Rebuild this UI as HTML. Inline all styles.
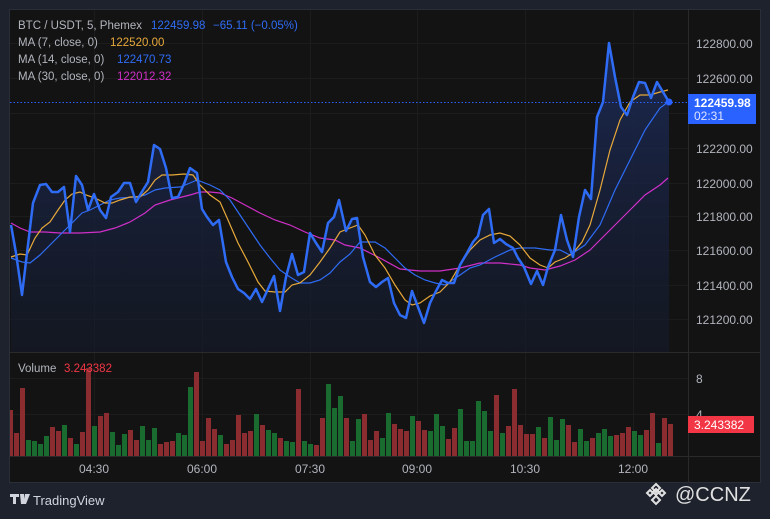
<!DOCTYPE html>
<html><head><meta charset="utf-8">
<style>
html,body{margin:0;padding:0;background:#1e222d;width:770px;height:519px;overflow:hidden;font-family:"Liberation Sans",sans-serif}
svg{position:absolute;left:0;top:0}
</style></head><body>
<svg width="770" height="519" viewBox="0 0 770 519" xmlns="http://www.w3.org/2000/svg" font-family="Liberation Sans, sans-serif">
<defs>
<linearGradient id="fg" x1="0" y1="0" x2="0" y2="1">
<stop offset="0" stop-color="#1c2a55" stop-opacity="0.95"/>
<stop offset="1" stop-color="#141a2a" stop-opacity="0.6"/>
</linearGradient>
<clipPath id="pc"><rect x="10" y="10" width="678" height="342"/></clipPath>
<clipPath id="vc"><rect x="10" y="353" width="678" height="103"/></clipPath>
</defs>
<rect width="770" height="519" fill="#1e222d"/>
<rect x="9.5" y="9.5" width="751" height="473" fill="#131313" stroke="#2a2e39"/>
<g stroke="#1c1c1c" stroke-width="1">
<line x1="94.5" y1="10" x2="94.5" y2="456"/><line x1="202.5" y1="10" x2="202.5" y2="456"/>
<line x1="310.5" y1="10" x2="310.5" y2="456"/><line x1="417.5" y1="10" x2="417.5" y2="456"/>
<line x1="525.5" y1="10" x2="525.5" y2="456"/><line x1="633.5" y1="10" x2="633.5" y2="456"/>
<line x1="10" y1="43.5" x2="688" y2="43.5"/><line x1="10" y1="78.5" x2="688" y2="78.5"/>
<line x1="10" y1="113.5" x2="688" y2="113.5"/><line x1="10" y1="148.5" x2="688" y2="148.5"/>
<line x1="10" y1="183.5" x2="688" y2="183.5"/><line x1="10" y1="216.5" x2="688" y2="216.5"/>
<line x1="10" y1="250.5" x2="688" y2="250.5"/><line x1="10" y1="285.5" x2="688" y2="285.5"/>
<line x1="10" y1="319.5" x2="688" y2="319.5"/>
<line x1="10" y1="378.5" x2="688" y2="378.5"/><line x1="10" y1="414.5" x2="688" y2="414.5"/>
</g>
<line x1="10" y1="352.5" x2="760" y2="352.5" stroke="#2a2a2a"/>
<line x1="10" y1="456.5" x2="760" y2="456.5" stroke="#2a2a2a"/>
<line x1="688.5" y1="10" x2="688.5" y2="483" stroke="#2a2a2a"/>
<g id="price" clip-path="url(#pc)"></g>
<g id="vol" clip-path="url(#vc)"></g>
<line x1="10" y1="102.5" x2="688" y2="102.5" stroke="#2962ff" stroke-dasharray="1.5 2"/>
<circle cx="669" cy="102" r="3.5" fill="#2962ff"/>
<g font-size="12" fill="#b2b5be">
<text x="696" y="48">122800.00</text><text x="696" y="83">122600.00</text>
<text x="696" y="153">122200.00</text><text x="696" y="188">122000.00</text>
<text x="696" y="221">121800.00</text><text x="696" y="255">121600.00</text>
<text x="696" y="290">121400.00</text><text x="696" y="324">121200.00</text>
<text x="696" y="383">8</text><text x="696" y="419">4</text>
</g>
<rect x="688" y="94" width="68" height="30" fill="#2962ff"/>
<text x="694" y="107" font-size="12" font-weight="bold" fill="#fff">122459.98</text>
<text x="694" y="120" font-size="12" fill="#dde4ff">02:31</text>
<rect x="688" y="416" width="66" height="17" fill="#f23645"/>
<text x="694" y="429" font-size="12" fill="#fff">3.243382</text>
<g font-size="12" fill="#b2b5be" text-anchor="middle">
<text x="94" y="473">04:30</text><text x="202" y="473">06:00</text><text x="310" y="473">07:30</text>
<text x="417" y="473">09:00</text><text x="525" y="473">10:30</text><text x="633" y="473">12:00</text>
</g>
<g font-size="11.5">
<text x="18" y="29" fill="#b2b5be">BTC / USDT, 5, Phemex</text>
<text x="151" y="29" fill="#2f6cf5">122459.98</text>
<text x="213" y="29" fill="#2f6cf5">−65.11 (−0.05%)</text>
<text x="18" y="46" fill="#b2b5be">MA (7, close, 0)</text>
<text x="110" y="46" fill="#e8a93a">122520.00</text>
<text x="18" y="63" fill="#b2b5be">MA (14, close, 0)</text>
<text x="117" y="63" fill="#2f6cf5">122470.73</text>
<text x="18" y="80" fill="#b2b5be">MA (30, close, 0)</text>
<text x="117" y="80" fill="#d02fc9">122012.32</text>
<text x="18" y="372" fill="#b2b5be">Volume</text>
<text x="64" y="372" fill="#f23645">3.243382</text>
</g>
<g fill="#d1d4dc">
<path d="M10 494h9v3h-3v7h-3v-7h-3z M20 494h4v10h-3z M25 494h5l-4 10h-3z"/>
<text x="33" y="505" font-size="13">TradingView</text>
</g>
<g fill="#e0e0e0">
<path d="M656 484l4 4-4 4-4-4z M650 490l3 3-3 3-3-3z M662 490l3 3-3 3-3-3z M656 496l4 4-4 4-4-4z M656 489l3 3-3 3-3-3z" fill="none" stroke="#e0e0e0" stroke-width="2"/>
<text x="675" y="501" font-size="20">@CCNZ</text>
</g>
</svg>
<script>
var P=[[11,225],[16,253],[22,295],[27,253],[33,203],[40,185],[46,184],[52,192],[58,192],[64,187],[70,232],[76,176],[82,185],[88,210],[94,194],[100,210],[106,218],[111,197],[118,192],[124,183],[130,183],[136,202],[143,190],[148,182],[154,145],[160,149],[166,168],[172,198],[178,197],[184,184],[190,168],[197,173],[202,209],[207,217],[213,225],[219,220],[226,262],[232,277],[238,289],[244,293],[250,299],[256,289],[262,302],[268,289],[274,276],[280,311],[286,277],[292,254],[298,275],[304,272],[310,233],[316,243],[322,252],[328,223],[334,217],[339,200],[346,231],[352,219],[357,218],[363,257],[370,282],[376,287],[382,282],[388,278],[394,303],[400,315],[406,318],[412,291],[418,307],[424,323],[430,303],[436,291],[442,280],[448,283],[454,283],[460,265],[467,253],[473,242],[478,236],[483,215],[489,209],[494,243],[500,239],[506,244],[513,248],[518,258],[524,267],[531,284],[537,271],[543,285],[548,267],[555,250],[561,215],[567,240],[573,257],[579,217],[585,190],[591,199],[597,117],[603,102],[609,43],[615,77],[621,107],[627,115],[633,97],[639,82],[645,83],[651,98],[657,82],[663,92],[669,102]];
var M7=[[11,257],[20,254],[27,255],[35,238],[42,228],[50,222],[58,210],[65,200],[72,194],[80,192],[86,195],[95,198],[105,203],[112,203],[120,200],[130,197],[140,197],[148,190],[155,180],[162,175],[172,175],[184,174],[193,175],[200,185],[210,195],[220,202],[228,220],[238,243],[248,262],[258,282],[265,291],[275,292],[285,292],[292,285],[300,283],[310,275],[320,262],[330,248],[340,232],[350,228],[358,225],[365,235],[375,255],[385,268],[395,285],[405,300],[412,305],[420,303],[430,296],[440,292],[450,282],[460,265],[470,250],[480,240],[490,235],[500,233],[510,236],[520,245],[530,258],[540,265],[548,268],[555,262],[565,258],[573,253],[582,242],[590,225],[600,190],[610,150],[620,120],[630,102],[640,95],[650,95],[660,92],[668,90]];
var M14=[[11,258],[22,262],[30,263],[40,255],[50,245],[60,235],[68,227],[75,220],[82,213],[90,210],[100,205],[110,200],[120,198],[135,197],[145,195],[155,190],[165,188],[180,187],[190,183],[197,180],[210,185],[220,190],[230,200],[240,215],[250,230],[260,245],[270,258],[280,270],[290,277],[300,283],[310,283],[320,280],[330,273],[340,262],[350,254],[360,242],[375,242],[385,248],[395,258],[405,268],[415,275],[425,280],[435,283],[445,285],[460,275],[470,268],[480,265],[495,257],[510,250],[520,248],[535,248],[550,250],[560,250],[570,255],[585,245],[600,225],[615,190],[630,160],[645,130],[660,108],[668,102]];
var M30=[[11,223],[20,228],[30,232],[45,232],[60,233],[80,233],[100,232],[115,228],[130,222],[145,213],[155,205],[170,200],[190,195],[200,192],[210,192],[220,193],[232,198],[245,205],[260,213],[275,220],[290,225],[305,232],[320,238],[335,240],[345,245],[360,248],[380,258],[400,269],[420,271],[440,271],[460,268],[480,263],[500,263],[520,265],[530,268],[545,270],[560,266],[575,260],[590,250],[600,240],[615,225],[630,210],[645,195],[660,185],[668,178]];
function pts(a){return a.map(function(p){return p[0]+','+p[1]}).join(' ')}
var h='<polygon points="'+pts(P)+' 669,352 11,352" fill="url(#fg)"/>';
h+='<polyline points="'+pts(M30)+'" fill="none" stroke="#d02fc9" stroke-width="1.2"/>';
h+='<polyline points="'+pts(M14)+'" fill="none" stroke="#2f6cf5" stroke-width="1.2"/>';
h+='<polyline points="'+pts(M7)+'" fill="none" stroke="#e8a93a" stroke-width="1.2"/>';
h+='<polyline points="'+pts(P)+'" fill="none" stroke="#2f6cf5" stroke-width="2.5" stroke-linejoin="round"/>';
document.getElementById('price').innerHTML=h;
var V=[[410,'r'],[433,'r'],[388,'r'],[440,'g'],[441,'g'],[444,'g'],[436,'g'],[427,'r'],[431,'r'],[425,'g'],[438,'r'],[444,'g'],[432,'r'],[368,'r'],[426,'g'],[416,'r'],[413,'r'],[432,'g'],[445,'g'],[434,'g'],[430,'r'],[440,'r'],[426,'g'],[440,'g'],[428,'g'],[444,'r'],[442,'r'],[441,'r'],[433,'g'],[435,'g'],[387,'g'],[372,'r'],[441,'r'],[418,'r'],[429,'r'],[435,'g'],[444,'r'],[440,'r'],[415,'r'],[433,'r'],[431,'r'],[414,'g'],[425,'r'],[430,'g'],[433,'g'],[438,'r'],[441,'g'],[442,'g'],[389,'r'],[441,'g'],[444,'g'],[445,'r'],[418,'r'],[384,'g'],[408,'g'],[396,'g'],
[418,'r'],[441,'g'],[419,'g'],[414,'r'],[440,'r'],[431,'r'],[438,'g'],[413,'g'],[424,'r'],[429,'r'],[431,'r'],[416,'g'],[421,'r'],[430,'r'],[431,'g'],[414,'g'],[426,'g'],[439,'r'],[428,'r'],[409,'g'],[441,'g'],[441,'g'],[401,'g'],[411,'g'],[431,'g'],[395,'r'],[433,'g'],[426,'r'],[389,'r'],[425,'r'],[434,'r'],[434,'r'],[427,'g'],[438,'r'],[417,'g'],[440,'g'],[419,'g'],[425,'r'],[442,'r'],[429,'g'],[441,'g'],[438,'r'],[433,'g'],[429,'g'],[436,'g'],[435,'r'],[433,'r'],[427,'r'],[431,'g'],[435,'g'],[430,'r'],[413,'r'],[443,'g'],[418,'r'],[424,'r']];
var s='';
for(var i=0;i<V.length;i++){var x=8+6*i,y=V[i][0];s+='<rect x="'+x+'" y="'+y+'" width="5" height="'+(456-y)+'" fill="'+(V[i][1]=='r'?'#8a2c30':'#1a6b30')+'"/>';}
document.getElementById('vol').innerHTML=s;
</script>
</body></html>
